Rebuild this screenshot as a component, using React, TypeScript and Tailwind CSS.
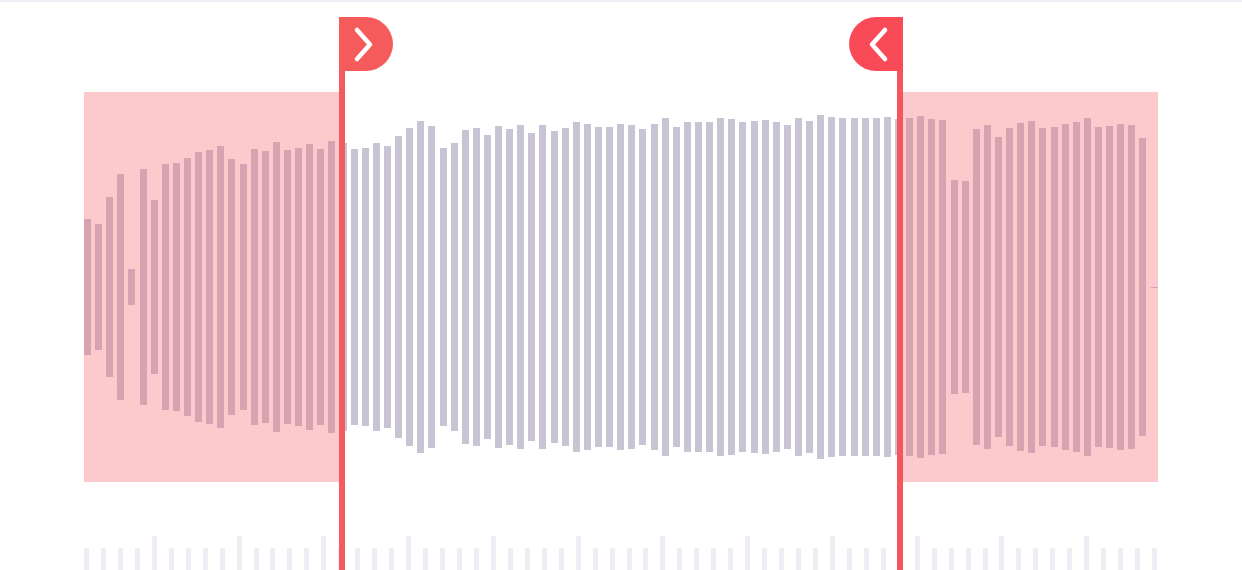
import React from "react";

// bar heights in px, measured around the centre line of the clip
const BAR_HEIGHTS = [
  136, 126, 180, 226, 36, 236, 174, 246, 248, 258, 270, 274, 282, 256, 246, 276,
  272, 290, 274, 278, 286, 276, 292, 288, 276, 278, 288, 282, 302, 318, 332, 322,
  278, 288, 314, 318, 304, 322, 316, 324, 308, 324, 312, 318, 330, 326, 320, 320,
  326, 324, 316, 326, 338, 320, 330, 330, 330, 338, 336, 330, 332, 334, 330, 324,
  338, 332, 344, 340, 338, 338, 338, 338, 340, 336, 338, 342, 336, 334, 214, 212,
  316, 324, 300, 318, 328, 332, 318, 320, 326, 330, 338, 320, 322, 326, 324, 298,
  1,
];

const TICK_COUNT = 64;

function Handle({side}: {side: "start" | "end"}) {
  const isStart = side === "start";
  return (
    <div
      className={`absolute top-[15px] bottom-0 w-[6px] ${
        isStart ? "left-[339px] bg-[#f45b5f]" : "left-[897px] bg-[#f5565e]"
      }`}
    >
      <div
        className={`absolute top-0 flex h-[54px] w-[54px] items-center justify-center ${
          isStart ? "left-0 rounded-r-full bg-[#f65b5c]" : "right-0 rounded-l-full bg-[#f94a58]"
        }`}
      >
        <svg width="54" height="54" viewBox="0 0 54 54" fill="none">
          <path
            d={isStart ? "M18 13 L31 27.5 L18 42" : "M36 13 L23 27.5 L36 42"}
            stroke="white"
            strokeWidth="4.5"
            strokeLinecap="round"
            strokeLinejoin="round"
          />
        </svg>
      </div>
    </div>
  );
}

export default function App() {
  return (
    <div className="relative h-[570px] w-full overflow-hidden border-t-2 border-[#ededf3] bg-white">
      <div className="relative ml-[84px] w-[1074px] pt-[90px]">
        <div className="relative flex h-[390px] items-center justify-between">
          {BAR_HEIGHTS.map((h, i) => (
            <div key={i} className="w-[7px] shrink-0 bg-[#c8c4d4]" style={{height: h}} />
          ))}
          {/* trimmed-out parts of the clip */}
          <div className="absolute inset-y-0 left-0 w-[255px] bg-[rgba(247,104,112,0.35)]" />
          <div className="absolute inset-y-0 right-0 w-[255px] bg-[rgba(247,104,112,0.35)]" />
        </div>

        <div className="mt-[54px] flex h-[40px] items-start justify-between">
          {Array.from({length: TICK_COUNT}, (_, i) => (
            <div
              key={i}
              className={`w-[5px] shrink-0 bg-[#eeedf4] ${i % 5 === 4 ? "mt-0 h-[40px]" : "mt-[12px] h-[28px]"}`}
            />
          ))}
        </div>
      </div>

      <Handle side="start" />
      <Handle side="end" />
    </div>
  );
}
